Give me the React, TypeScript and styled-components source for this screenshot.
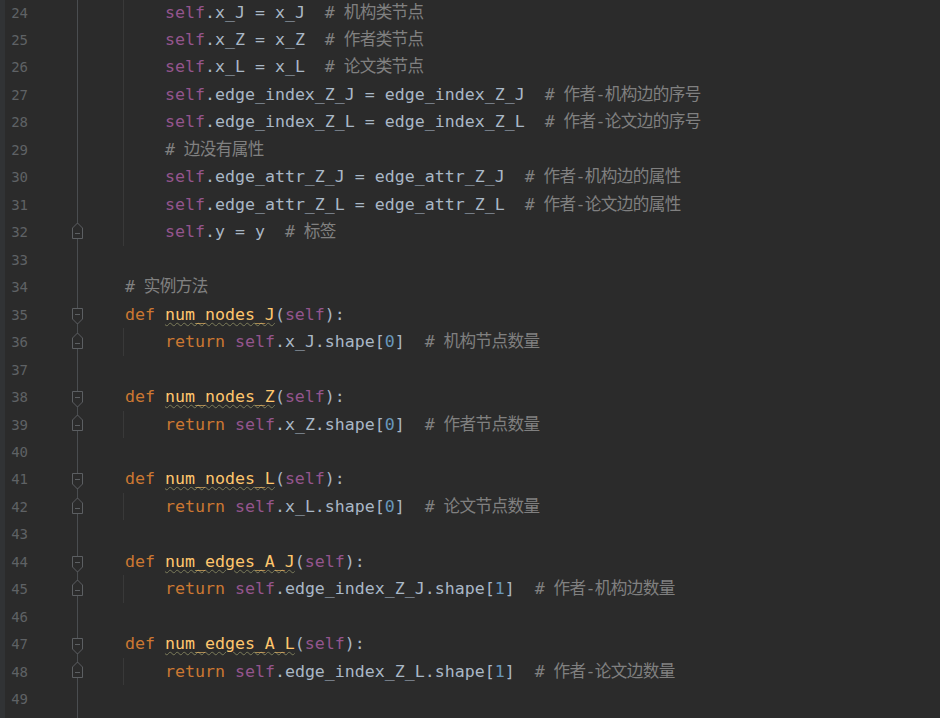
import React from "react";
import styled, { createGlobalStyle } from "styled-components";

const Global = createGlobalStyle`
  html, body { margin: 0; padding: 0; background: #2b2b2b; overflow: hidden; }
  #root { width: 940px; height: 718px; overflow: hidden; }
`;

const LINE_H = 27.48;

const Editor = styled.div`
  width: 940px;
  height: 718px;
  overflow: hidden;
  background: #2b2b2b;
  display: flex;
  flex-direction: column;
`;

const Lines = styled.div`
  display: flex;
  flex-direction: column;
  margin-top: -1.5px;
`;

const Row = styled.div`
  display: flex;
  height: ${LINE_H}px;
  flex-shrink: 0;
`;

const Strip = styled.div`
  width: 5px;
  flex-shrink: 0;
  background: #313335;
`;

const LineNo = styled.div`
  width: 23px;
  flex-shrink: 0;
  text-align: right;
  font-family: "DejaVu Sans Mono", monospace;
  font-size: 14px;
  line-height: ${LINE_H}px;
  padding-top: 1px;
  box-sizing: border-box;
  color: #5f6265;
`;

const GutterGap = styled.div`
  width: 44px;
  flex-shrink: 0;
`;

const FoldCell = styled.div`
  width: 11px;
  flex-shrink: 0;
  display: flex;
  align-items: center;
  justify-content: center;
  background: linear-gradient(#4a4d50, #4a4d50) no-repeat 5px 0 / 1px 100%;
`;

const Code = styled.div`
  display: flex;
  align-items: stretch;
  padding-left: 2px;
  white-space: pre;
  font-family: "DejaVu Sans Mono", "Noto Sans CJK SC", monospace;
  font-size: 16.6px;
  line-height: ${LINE_H}px;
  color: #a9b7c6;
`;

const IndentUnit = styled.span<{ $guide: boolean }>`
  display: block;
  width: 40px;
  flex-shrink: 0;
  background: ${(p) =>
    p.$guide
      ? "linear-gradient(#393939, #393939) no-repeat 38px 0 / 1px 100%"
      : "none"};
`;

const Text = styled.span``;

const Tok = styled.span<{ $k: string }>`
  color: ${(p) =>
    ({
      t: "#a9b7c6",
      s: "#94558d",
      k: "#cc7832",
      f: "#ffc66d",
      c: "#808080",
      n: "#6897bb",
    } as Record<string, string>)[p.$k]};
  ${(p) =>
    p.$k === "f"
      ? `text-decoration: underline wavy #7c7c5a; text-decoration-thickness: 1px; text-underline-offset: 2px;`
      : ""}
  ${(p) => (p.$k === "c" ? `letter-spacing: -0.6px;` : "")}
`;

const FoldMark: React.FC<{ kind: "start" | "end" }> = ({ kind }) => (
  <svg width="11" height="22" viewBox="0 0 11 22" style={{ display: "block" }}>
    {kind === "start" ? (
      <>
        <path d="M0.5 5.5 H10.5 V16 L5.5 21 L0.5 16 Z" fill="#2b2b2b" stroke="#5c5f62" />
        <path d="M3 11.5 H8" stroke="#5c5f62" />
      </>
    ) : (
      <>
        <path d="M0.5 17.5 H10.5 V7 L5.5 2 L0.5 7 Z" fill="#2b2b2b" stroke="#5c5f62" />
        <path d="M3 12.5 H8" stroke="#5c5f62" />
      </>
    )}
  </svg>
);

type T = [string, string];
type Line = { n: number; indent: number; guide?: boolean; fold?: "start" | "end"; toks: T[] };

const L = (
  n: number,
  indent: number,
  toks: T[],
  fold?: "start" | "end",
  guide = indent >= 2
): Line => ({ n, indent, toks, fold, guide });

const lines: Line[] = [
  L(24, 2, [["s", "self"], ["t", ".x_J = x_J  "], ["c", "# 机构类节点"]]),
  L(25, 2, [["s", "self"], ["t", ".x_Z = x_Z  "], ["c", "# 作者类节点"]]),
  L(26, 2, [["s", "self"], ["t", ".x_L = x_L  "], ["c", "# 论文类节点"]]),
  L(27, 2, [["s", "self"], ["t", ".edge_index_Z_J = edge_index_Z_J  "], ["c", "# 作者-机构边的序号"]]),
  L(28, 2, [["s", "self"], ["t", ".edge_index_Z_L = edge_index_Z_L  "], ["c", "# 作者-论文边的序号"]]),
  L(29, 2, [["c", "# 边没有属性"]]),
  L(30, 2, [["s", "self"], ["t", ".edge_attr_Z_J = edge_attr_Z_J  "], ["c", "# 作者-机构边的属性"]]),
  L(31, 2, [["s", "self"], ["t", ".edge_attr_Z_L = edge_attr_Z_L  "], ["c", "# 作者-论文边的属性"]]),
  L(32, 2, [["s", "self"], ["t", ".y = y  "], ["c", "# 标签"]], "end"),
  L(33, 0, []),
  L(34, 1, [["c", "# 实例方法"]]),
  L(35, 1, [["k", "def "], ["f", "num_nodes_J"], ["t", "("], ["s", "self"], ["t", "):"]], "start"),
  L(36, 2, [["k", "return "], ["s", "self"], ["t", ".x_J.shape["], ["n", "0"], ["t", "]  "], ["c", "# 机构节点数量"]], "end"),
  L(37, 0, []),
  L(38, 1, [["k", "def "], ["f", "num_nodes_Z"], ["t", "("], ["s", "self"], ["t", "):"]], "start"),
  L(39, 2, [["k", "return "], ["s", "self"], ["t", ".x_Z.shape["], ["n", "0"], ["t", "]  "], ["c", "# 作者节点数量"]], "end"),
  L(40, 0, []),
  L(41, 1, [["k", "def "], ["f", "num_nodes_L"], ["t", "("], ["s", "self"], ["t", "):"]], "start"),
  L(42, 2, [["k", "return "], ["s", "self"], ["t", ".x_L.shape["], ["n", "0"], ["t", "]  "], ["c", "# 论文节点数量"]], "end"),
  L(43, 0, []),
  L(44, 1, [["k", "def "], ["f", "num_edges_A_J"], ["t", "("], ["s", "self"], ["t", "):"]], "start"),
  L(45, 2, [["k", "return "], ["s", "self"], ["t", ".edge_index_Z_J.shape["], ["n", "1"], ["t", "]  "], ["c", "# 作者-机构边数量"]], "end"),
  L(46, 0, []),
  L(47, 1, [["k", "def "], ["f", "num_edges_A_L"], ["t", "("], ["s", "self"], ["t", "):"]], "start"),
  L(48, 2, [["k", "return "], ["s", "self"], ["t", ".edge_index_Z_L.shape["], ["n", "1"], ["t", "]  "], ["c", "# 作者-论文边数量"]], "end"),
  L(49, 0, []),
];

export default function App() {
  return (
    <>
      <Global />
      <Editor>
        <Lines>
          {lines.map((ln) => (
            <Row key={ln.n}>
              <Strip />
              <LineNo>{ln.n}</LineNo>
              <GutterGap />
              <FoldCell>{ln.fold && <FoldMark kind={ln.fold} />}</FoldCell>
              <Code>
                {Array.from({ length: ln.indent }).map((_, i) => (
                  <IndentUnit key={i} $guide={!!ln.guide && i === 0 && ln.indent >= 2} />
                ))}
                <Text>
                  {ln.toks.map(([k, s], i) => (
                    <Tok key={i} $k={k}>
                      {s}
                    </Tok>
                  ))}
                </Text>
              </Code>
            </Row>
          ))}
          <Row>
            <Strip />
            <LineNo />
            <GutterGap />
            <FoldCell />
            <Code />
          </Row>
        </Lines>
      </Editor>
    </>
  );
}
